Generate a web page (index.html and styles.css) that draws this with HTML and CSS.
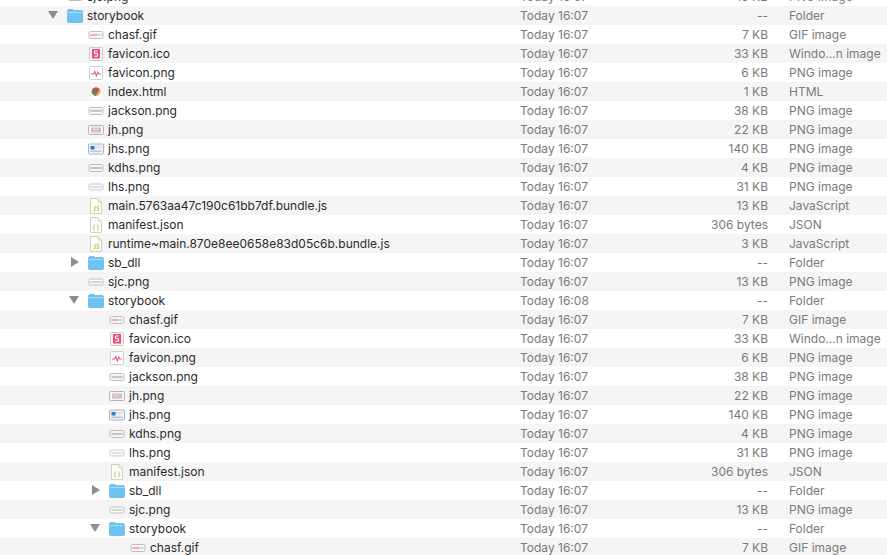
FILE: index.html
```html
<!DOCTYPE html>
<html lang="en">
<head>
<meta charset="utf-8">
<title>Finder list</title>
<link rel="stylesheet" href="styles.css">
</head>
<body>
<svg class="defs" width="0" height="0" aria-hidden="true">
  <symbol id="folder" viewBox="0 0 16 14">
    <path d="M.5 2.200C.5 1.200 1.100.5 2 .5h3.600c.7 0 1 .7 1.600 1.100h7c.9 0 1.300.6 1.300 1.400v9.200c0 .9-.5 1.300-1.300 1.300H1.800c-.8 0-1.300-.5-1.300-1.300z" fill="#6cc4f2" stroke="#4fa9dc" stroke-width=".6"/>
    <path d="M.6 3.600h14.800" stroke="#a5defa" stroke-width="1"/>
  </symbol>
  <symbol id="bar" viewBox="0 0 16 16">
    <rect x="1" y="4.500" width="14" height="7" rx="1.500" fill="#fafafa" stroke="#bcbcc0"/>
    <rect x="2.500" y="6.800" width="11" height="2.400" fill="#c6c7cc"/>
  </symbol>
  <symbol id="barl" viewBox="0 0 16 16">
    <rect x="1" y="5" width="14" height="6" rx="1.500" fill="#fcfcfc" stroke="#cbcbcf"/>
    <rect x="2.500" y="7.300" width="11" height="1.400" fill="#d8d8dc"/>
  </symbol>
  <symbol id="barg" viewBox="0 0 16 16">
    <rect x="1" y="5" width="14" height="6" rx="1.500" fill="#fcfcfc" stroke="#bcbebc"/>
    <rect x="2.500" y="7.300" width="11" height="1.400" fill="#bccfc0"/>
  </symbol>
  <symbol id="barr" viewBox="0 0 16 16">
    <rect x="1" y="4.500" width="14" height="7" rx="1.500" fill="#fafafa" stroke="#c0bcbc"/>
    <rect x="2.500" y="6.800" width="7" height="2.400" fill="#eeb0b6"/>
    <rect x="9.500" y="6.800" width="4" height="2.400" fill="#dcd4d6"/>
  </symbol>
  <symbol id="ico" viewBox="0 0 16 16">
    <rect x="1.500" y="1.500" width="13" height="13" rx="1" fill="#f7f3f4" stroke="#cfcbcc"/>
    <rect x="4" y="3" width="8" height="9.500" rx=".5" fill="#ee4f78"/>
    <path d="M9.700 5H6.500v2.500h3v2.700H6.300" fill="none" stroke="#fff" stroke-width="1"/>
  </symbol>
  <symbol id="fav" viewBox="0 0 16 16">
    <rect x="1.500" y="1.500" width="13" height="13" rx="1" fill="#fff" stroke="#cfcfcf"/>
    <path d="M3 9h2.500l1.300-2.500 1.500 4.500 1.500-4 1 2h2" fill="none" stroke="#ea6078" stroke-width="1.100"/>
  </symbol>
  <symbol id="chrome" viewBox="0 0 16 16">
    <path d="M2.500 0h8l3 3v13h-11z" fill="#fbfbfb"/>
    <circle cx="8" cy="7.500" r="4.300" fill="#e5483a"/>
    <path d="M4.200 5.500L6.500 9.300 8 11.800a4.300 4.300 0 0 1-3.800-6.300z" fill="#3fa652"/>
    <path d="M12 5.500a4.300 4.300 0 0 1-4 6.300L10 8z" fill="#f5c531"/>
    <circle cx="8" cy="7.500" r="1.800" fill="#3f7fd8"/>
  </symbol>
  <symbol id="jh" viewBox="0 0 16 16">
    <rect x=".5" y="3.500" width="15" height="9" rx="1" fill="#f5f5f5" stroke="#b8b4b4"/>
    <rect x="3" y="5.500" width="10" height="5" fill="#d3bdbf"/>
    <rect x="5" y="6.500" width="5" height="2" fill="#e6d2d3"/>
  </symbol>
  <symbol id="jhs" viewBox="0 0 16 16">
    <rect x=".5" y="3" width="15" height="10" rx="1" fill="#eef3f8" stroke="#aeb4ba"/>
    <rect x="2.500" y="5" width="4" height="3.500" fill="#2f7fc6"/>
    <rect x="7" y="5.500" width="6.500" height="1" fill="#c2d0dd"/>
    <rect x="2.500" y="9.500" width="11" height="1.500" fill="#b8c4d0"/>
  </symbol>
  <symbol id="js" viewBox="0 0 16 16">
    <path d="M2.500.5h7.500l3.500 3.500v11.500h-11z" fill="#fdfdf6" stroke="#d0d0c9"/>
    <path d="M10 .5V4h3.500" fill="#f2f2ea" stroke="#d0d0c9"/>
    <path d="M7 8v4.200c0 1-1.300 1-1.800.4M11 8.600c-.7-.7-2.200-.5-2.200.6 0 1.300 2.300.9 2.300 2.300 0 1.200-1.700 1.300-2.500.5" fill="none" stroke="#bcbd48" stroke-width="1"/>
  </symbol>
  <symbol id="json" viewBox="0 0 16 16">
    <path d="M2.500.5h7.500l3.500 3.500v11.500h-11z" fill="#fdfdf8" stroke="#d0d0cb"/>
    <path d="M10 .5V4h3.500" fill="#f2f2ec" stroke="#d0d0cb"/>
    <path d="M6.800 7.500c-1.200 0-.5 2.500-1.200 3 .7.500 0 3 1.200 3M9.200 7.500c1.200 0 .5 2.500 1.200 3-.7.500 0 3-1.200 3" fill="none" stroke="#bcbd60" stroke-width=".9"/>
  </symbol>
  <symbol id="open" viewBox="0 0 10 8"><path d="M0 0h10L5 8z" fill="#8e8e8e"/></symbol>
  <symbol id="closed" viewBox="0 0 8 10"><path d="M0 0l8 5-8 5z" fill="#8e8e8e"/></symbol>
</svg>
<main class="list">
  <div class="row d0"><span class="name"><svg class="icon"><use href="#bar"/></svg>sjc.png</span><span class="date">Today 16:07</span><span class="size">13 KB</span><span class="kind">PNG image</span></div>
  <div class="row d0"><span class="name"><svg class="tri open"><use href="#open"/></svg><svg class="icon"><use href="#folder"/></svg>storybook</span><span class="date">Today 16:07</span><span class="size">--</span><span class="kind">Folder</span></div>
  <div class="row d1"><span class="name"><svg class="icon"><use href="#barr"/></svg>chasf.gif</span><span class="date">Today 16:07</span><span class="size">7 KB</span><span class="kind">GIF image</span></div>
  <div class="row d1"><span class="name"><svg class="icon"><use href="#ico"/></svg>favicon.ico</span><span class="date">Today 16:07</span><span class="size">33 KB</span><span class="kind">Windo…n image</span></div>
  <div class="row d1"><span class="name"><svg class="icon"><use href="#fav"/></svg>favicon.png</span><span class="date">Today 16:07</span><span class="size">6 KB</span><span class="kind">PNG image</span></div>
  <div class="row d1"><span class="name"><svg class="icon"><use href="#chrome"/></svg>index.html</span><span class="date">Today 16:07</span><span class="size">1 KB</span><span class="kind">HTML</span></div>
  <div class="row d1"><span class="name"><svg class="icon"><use href="#bar"/></svg>jackson.png</span><span class="date">Today 16:07</span><span class="size">38 KB</span><span class="kind">PNG image</span></div>
  <div class="row d1"><span class="name"><svg class="icon"><use href="#jh"/></svg>jh.png</span><span class="date">Today 16:07</span><span class="size">22 KB</span><span class="kind">PNG image</span></div>
  <div class="row d1"><span class="name"><svg class="icon"><use href="#jhs"/></svg>jhs.png</span><span class="date">Today 16:07</span><span class="size">140 KB</span><span class="kind">PNG image</span></div>
  <div class="row d1"><span class="name"><svg class="icon"><use href="#bar"/></svg>kdhs.png</span><span class="date">Today 16:07</span><span class="size">4 KB</span><span class="kind">PNG image</span></div>
  <div class="row d1"><span class="name"><svg class="icon"><use href="#barl"/></svg>lhs.png</span><span class="date">Today 16:07</span><span class="size">31 KB</span><span class="kind">PNG image</span></div>
  <div class="row d1"><span class="name"><svg class="icon"><use href="#js"/></svg>main.5763aa47c190c61bb7df.bundle.js</span><span class="date">Today 16:07</span><span class="size">13 KB</span><span class="kind">JavaScript</span></div>
  <div class="row d1"><span class="name"><svg class="icon"><use href="#json"/></svg>manifest.json</span><span class="date">Today 16:07</span><span class="size">306 bytes</span><span class="kind">JSON</span></div>
  <div class="row d1"><span class="name"><svg class="icon"><use href="#js"/></svg>runtime~main.870e8ee0658e83d05c6b.bundle.js</span><span class="date">Today 16:07</span><span class="size">3 KB</span><span class="kind">JavaScript</span></div>
  <div class="row d1"><span class="name"><svg class="tri closed"><use href="#closed"/></svg><svg class="icon"><use href="#folder"/></svg>sb_dll</span><span class="date">Today 16:07</span><span class="size">--</span><span class="kind">Folder</span></div>
  <div class="row d1"><span class="name"><svg class="icon"><use href="#barg"/></svg>sjc.png</span><span class="date">Today 16:07</span><span class="size">13 KB</span><span class="kind">PNG image</span></div>
  <div class="row d1"><span class="name"><svg class="tri open"><use href="#open"/></svg><svg class="icon"><use href="#folder"/></svg>storybook</span><span class="date">Today 16:08</span><span class="size">--</span><span class="kind">Folder</span></div>
  <div class="row d2"><span class="name"><svg class="icon"><use href="#barr"/></svg>chasf.gif</span><span class="date">Today 16:07</span><span class="size">7 KB</span><span class="kind">GIF image</span></div>
  <div class="row d2"><span class="name"><svg class="icon"><use href="#ico"/></svg>favicon.ico</span><span class="date">Today 16:07</span><span class="size">33 KB</span><span class="kind">Windo…n image</span></div>
  <div class="row d2"><span class="name"><svg class="icon"><use href="#fav"/></svg>favicon.png</span><span class="date">Today 16:07</span><span class="size">6 KB</span><span class="kind">PNG image</span></div>
  <div class="row d2"><span class="name"><svg class="icon"><use href="#bar"/></svg>jackson.png</span><span class="date">Today 16:07</span><span class="size">38 KB</span><span class="kind">PNG image</span></div>
  <div class="row d2"><span class="name"><svg class="icon"><use href="#jh"/></svg>jh.png</span><span class="date">Today 16:07</span><span class="size">22 KB</span><span class="kind">PNG image</span></div>
  <div class="row d2"><span class="name"><svg class="icon"><use href="#jhs"/></svg>jhs.png</span><span class="date">Today 16:07</span><span class="size">140 KB</span><span class="kind">PNG image</span></div>
  <div class="row d2"><span class="name"><svg class="icon"><use href="#bar"/></svg>kdhs.png</span><span class="date">Today 16:07</span><span class="size">4 KB</span><span class="kind">PNG image</span></div>
  <div class="row d2"><span class="name"><svg class="icon"><use href="#barl"/></svg>lhs.png</span><span class="date">Today 16:07</span><span class="size">31 KB</span><span class="kind">PNG image</span></div>
  <div class="row d2"><span class="name"><svg class="icon"><use href="#json"/></svg>manifest.json</span><span class="date">Today 16:07</span><span class="size">306 bytes</span><span class="kind">JSON</span></div>
  <div class="row d2"><span class="name"><svg class="tri closed"><use href="#closed"/></svg><svg class="icon"><use href="#folder"/></svg>sb_dll</span><span class="date">Today 16:07</span><span class="size">--</span><span class="kind">Folder</span></div>
  <div class="row d2"><span class="name"><svg class="icon"><use href="#barg"/></svg>sjc.png</span><span class="date">Today 16:07</span><span class="size">13 KB</span><span class="kind">PNG image</span></div>
  <div class="row d2"><span class="name"><svg class="tri open"><use href="#open"/></svg><svg class="icon"><use href="#folder"/></svg>storybook</span><span class="date">Today 16:07</span><span class="size">--</span><span class="kind">Folder</span></div>
  <div class="row d3"><span class="name"><svg class="icon"><use href="#barr"/></svg>chasf.gif</span><span class="date">Today 16:07</span><span class="size">7 KB</span><span class="kind">GIF image</span></div>
</main>
</body>
</html>
```

FILE: styles.css
```css
html, body {
  margin: 0;
  height: 100%;
  overflow: hidden;
  background: #fff;
}

.defs {
  display: block;
  height: 0;
}

.list {
  margin-top: -13px;
  font: 12px/19px Inter, "Liberation Sans", Arial, sans-serif;
  color: #2a2a2a;
}

.row {
  display: grid;
  grid-template-columns: 520px 67px 181px 1fr;
  height: 19px;
  white-space: nowrap;
}

.row:nth-child(even) {
  background: #f5f5f5;
}

.name {
  position: relative;
  display: flex;
  align-items: flex-start;
}

.d0 .name { padding-left: 67px; }
.d1 .name { padding-left: 88px; }
.d2 .name { padding-left: 109px; }
.d3 .name { padding-left: 130px; }

.icon {
  flex: none;
  width: 16px;
  height: 16px;
  margin-top: 2px;
  margin-right: 4px;
}

.tri {
  position: absolute;
  top: 5px;
  width: 10px;
  height: 8px;
}

.tri.closed {
  top: 4px;
  width: 8px;
  height: 10px;
  margin-left: 2px;
}

.d0 .tri { left: 48px; }
.d1 .tri { left: 69px; }
.d2 .tri { left: 90px; }

.date, .size, .kind {
  color: #7a7a7a;
}

.size {
  text-align: right;
}

.kind {
  padding-left: 21px;
}
```
